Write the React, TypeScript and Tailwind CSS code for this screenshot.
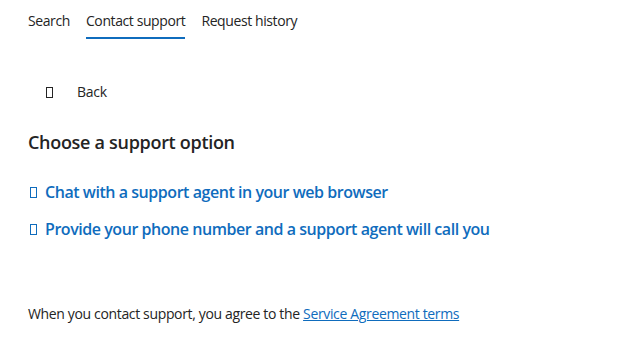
import React from "react";

const Tofu = ({ className }: { className?: string }) => (
  <span
    className={`inline-block w-[7px] h-[11px] border border-current ${className ?? ""}`}
    aria-hidden="true"
  />
);

const tabs = ["Search", "Contact support", "Request history"];

export default function App() {
  return (
    <div
      className="w-[619px] h-[354px] bg-white text-[#242424] px-7"
      style={{ fontFamily: '"Open Sans", "Noto Sans", sans-serif' }}
    >
      <nav className="flex gap-4 pt-[11px] text-[14px]">
        {tabs.map((t, i) => (
          <div
            key={t}
            className={`pb-[6px] leading-5 tracking-[-0.4px] border-b-2 ${
              i === 1 ? "border-[#0f6cbd]" : "border-transparent"
            }`}
          >
            {t}
          </div>
        ))}
      </nav>

      <button className="flex items-center gap-6 ml-[18px] mt-[43px] text-[14px] leading-5 tracking-[-0.3px]">
        <Tofu className="text-[#242424]" />
        Back
      </button>

      <h2 className="mt-[28px] text-[18px] font-semibold leading-6 tracking-[-0.3px]">
        Choose a support option
      </h2>

      <div className="mt-[28px] flex flex-col gap-[17px] text-[16px] font-semibold text-[#0f6cbd] tracking-[-0.45px]">
        <a className="flex items-center gap-[8px] leading-5 ml-[2px]">
          <Tofu />
          Chat with a support agent in your web browser
        </a>
        <a className="flex items-center gap-[8px] leading-5 ml-[2px]">
          <Tofu />
          Provide your phone number and a support agent will call you
        </a>
      </div>

      <p className="mt-[65px] text-[14px] leading-5 tracking-[-0.35px]">
        When you contact support, you agree to the{" "}
        <a className="text-[#0f6cbd] underline">Service Agreement terms</a>
      </p>
    </div>
  );
}
